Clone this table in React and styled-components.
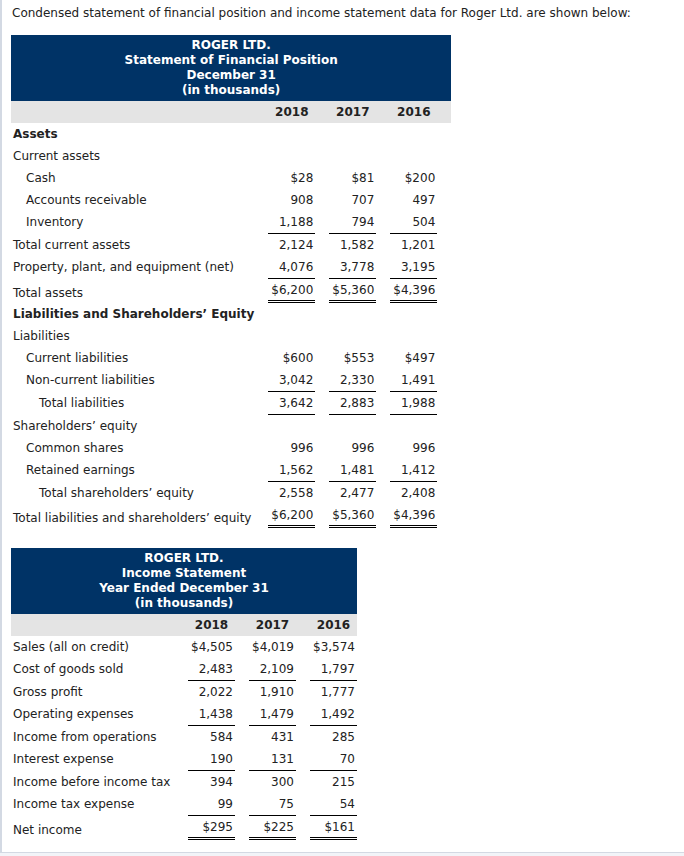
import React from 'react';
import styled, { createGlobalStyle } from 'styled-components';

const GlobalStyle = createGlobalStyle`
    html, body {
        margin: 0;
        padding: 0;
        background: #f2f4f8;
    }
    body {
        font-family: "DejaVu Sans", Verdana, sans-serif;
        font-size: 12px;
        color: #222;
    }
`;

const Page = styled.div`
    background: #fff;
    border-left: 2px solid #d3d9e3;
    border-bottom: 1px solid #d3d9e3;
    padding: 6px 0 12px 9px;
`;

const Intro = styled.p`
    margin: 0 0 14px 1px;
    line-height: 15px;
`;

const Table = styled.div`
    width: ${(p) => p.width}px;
    display: grid;
    grid-template-columns: 1fr repeat(3, 61px);
    padding-right: ${(p) => p.padRight}px;
    margin-bottom: ${(p) => p.gap || 0}px;
    box-sizing: border-box;
`;

const Header = styled.div`
    grid-column: 1 / -1;
    background: #003366;
    color: #fff;
    font-weight: bold;
    text-align: center;
    line-height: 15px;
    padding: 3px 0 3px;
    margin-right: -${(p) => p.padRight}px;
`;

const YearBar = styled.div`
    grid-column: 1 / -1;
    display: grid;
    grid-template-columns: subgrid;
    background: #e4e4e4;
    height: 22px;
    align-items: center;
    margin-right: -${(p) => p.padRight}px;
    padding-right: ${(p) => p.padRight}px;
`;

const Year = styled.div`
    margin-left: 14px;
    text-align: center;
    font-weight: bold;
`;

const Label = styled.div`
    padding-left: ${(p) => 2 + p.level * 13}px;
    font-weight: ${(p) => (p.bold ? 'bold' : 'normal')};
    height: ${(p) => p.h}px;
    display: flex;
    align-items: ${(p) => (p.low ? 'flex-end' : 'center')};
    padding-bottom: ${(p) => p.pb}px;
    box-sizing: border-box;
    white-space: nowrap;
`;

const Value = styled.div`
    margin-left: 14px;
    height: ${(p) => p.h}px;
    display: flex;
    align-items: center;
    justify-content: flex-end;
    padding-right: 2px;
    box-sizing: border-box;
    border-bottom: ${(p) =>
        p.line === 'double' ? '3px double #000' : p.line === 'single' ? '1px solid #000' : 'none'};
`;

const position = [
    { label: 'Assets', level: 0, bold: true },
    { label: 'Current assets', level: 0 },
    { label: 'Cash', level: 1, values: ['$28', '$81', '$200'] },
    { label: 'Accounts receivable', level: 1, values: ['908', '707', '497'] },
    { label: 'Inventory', level: 1, values: ['1,188', '794', '504'], line: 'single' },
    { label: 'Total current assets', level: 0, values: ['2,124', '1,582', '1,201'] },
    { label: 'Property, plant, and equipment (net)', level: 0, values: ['4,076', '3,778', '3,195'], line: 'single' },
    { label: 'Total assets', level: 0, values: ['$6,200', '$5,360', '$4,396'], line: 'double', low: true },
    { label: 'Liabilities and Shareholders\u2019 Equity', level: 0, bold: true },
    { label: 'Liabilities', level: 0 },
    { label: 'Current liabilities', level: 1, values: ['$600', '$553', '$497'] },
    { label: 'Non-current liabilities', level: 1, values: ['3,042', '2,330', '1,491'], line: 'single' },
    { label: 'Total liabilities', level: 2, values: ['3,642', '2,883', '1,988'], line: 'single' },
    { label: 'Shareholders\u2019 equity', level: 0 },
    { label: 'Common shares', level: 1, values: ['996', '996', '996'] },
    { label: 'Retained earnings', level: 1, values: ['1,562', '1,481', '1,412'], line: 'single' },
    { label: 'Total shareholders\u2019 equity', level: 2, values: ['2,558', '2,477', '2,408'] },
    { label: 'Total liabilities and shareholders\u2019 equity', level: 0, values: ['$6,200', '$5,360', '$4,396'], line: 'double', low: true },
];

const income = [
    { label: 'Sales (all on credit)', level: 0, values: ['$4,505', '$4,019', '$3,574'] },
    { label: 'Cost of goods sold', level: 0, values: ['2,483', '2,109', '1,797'], line: 'single' },
    { label: 'Gross profit', level: 0, values: ['2,022', '1,910', '1,777'] },
    { label: 'Operating expenses', level: 0, values: ['1,438', '1,479', '1,492'], line: 'single' },
    { label: 'Income from operations', level: 0, values: ['584', '431', '285'] },
    { label: 'Interest expense', level: 0, values: ['190', '131', '70'], line: 'single' },
    { label: 'Income before income tax', level: 0, values: ['394', '300', '215'] },
    { label: 'Income tax expense', level: 0, values: ['99', '75', '54'], line: 'single' },
    { label: 'Net income', level: 0, values: ['$295', '$225', '$161'], line: 'double', low: true },
];

// underlined rows are a bit taller so the text keeps the same pitch
function rowHeight(row) {
    if (row.line === 'double') return 24;
    if (row.line === 'single') return 23;
    return 22;
}

function labelPad(row) {
    if (row.low) return 3;
    if (row.line === 'single') return 1;
    return 0;
}

function Statement({ title, rows, width, padRight, gap }) {
    return (
        <Table width={width} padRight={padRight} gap={gap}>
            <Header padRight={padRight}>
                {title.map((line) => (
                    <div key={line}>{line}</div>
                ))}
            </Header>
            <YearBar padRight={padRight}>
                <div />
                <Year>2018</Year>
                <Year>2017</Year>
                <Year>2016</Year>
            </YearBar>
            {rows.map((row) => {
                const h = rowHeight(row);
                return (
                    <React.Fragment key={row.label}>
                        <Label level={row.level} bold={row.bold} h={h} low={row.low} pb={labelPad(row)}>
                            {row.label}
                        </Label>
                        {[0, 1, 2].map((i) => (
                            <Value key={i} h={h} line={row.line}>
                                {row.values ? row.values[i] : ''}
                            </Value>
                        ))}
                    </React.Fragment>
                );
            })}
        </Table>
    );
}

export default function App() {
    return (
        <>
            <GlobalStyle />
            <Page>
                <Intro>
                    Condensed statement of financial position and income statement data for Roger Ltd. are shown below:
                </Intro>
                <Statement
                    title={['ROGER LTD.', 'Statement of Financial Position', 'December 31', '(in thousands)']}
                    rows={position}
                    width={440}
                    padRight={14}
                    gap={20}
                />
                <Statement
                    title={['ROGER LTD.', 'Income Statement', 'Year Ended December 31', '(in thousands)']}
                    rows={income}
                    width={346}
                    padRight={0}
                />
            </Page>
        </>
    );
}
